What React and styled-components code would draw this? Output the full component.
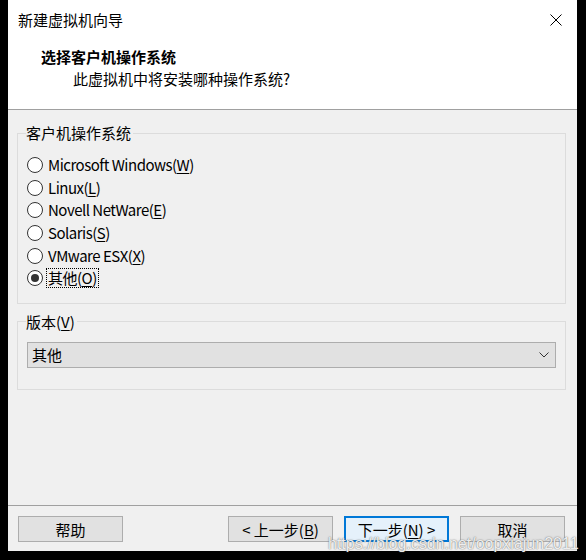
import React, { useState } from 'react';
import styled, { createGlobalStyle } from 'styled-components';

const GlobalStyle = createGlobalStyle`
  html, body {
    margin: 0;
    padding: 0;
    background: #000;
  }
  body {
    font-family: "Noto Sans CJK SC", "Noto Sans", sans-serif;
    font-size: 15px;
    color: #000;
  }
`;

// ------------- Styled components -------------
const Page = styled.div`
  position: relative;
  width: 586px;
  height: 560px;
  background: #000;
  overflow: hidden;
`;

const Window = styled.div`
  margin-left: 8px;
  width: 569px;
  height: 551px;
  background: #f0f0f0;
  display: flex;
  flex-direction: column;
`;

const TitleBar = styled.div`
  height: 38px;
  background: #fff;
  display: flex;
  align-items: center;
  justify-content: space-between;
  padding-left: 10px;
  padding-top: 1px;
  box-sizing: border-box;
`;

const Title = styled.span`
  font-size: 15px;
  line-height: 20px;
`;

const CloseButton = styled.button`
  width: 42px;
  height: 38px;
  border: none;
  background: transparent;
  padding: 0;
  display: flex;
  align-items: center;
  justify-content: center;
`;

const Header = styled.div`
  height: 72px;
  background: #fff;
  box-sizing: border-box;
  padding: 8px 0 0 33px;
  border-bottom: 1px solid #a0a0a0;
`;

const Heading = styled.div`
  font-weight: bold;
  font-size: 15px;
  line-height: 22px;
`;

const SubTitle = styled.div`
  padding-left: 32px;
  font-size: 15px;
  line-height: 22px;
`;

const Content = styled.div`
  flex: 1;
  padding: 13px 11px 0 9px;
  display: flex;
  flex-direction: column;
  gap: 8px;
`;

const Group = styled.fieldset`
  margin: 0;
  border: 1px solid #dcdcdc;
  padding: 0 9px ${p => p.$bottom}px 9px;
`;

const Legend = styled.legend`
  padding: 0 2px 0 0;
  margin-left: -1px;
  font-size: 15px;
  line-height: 20px;
`;

const RadioList = styled.div`
  padding-top: 11px;
  display: flex;
  flex-direction: column;
`;

const RadioRow = styled.label`
  height: 22.6px;
  display: flex;
  align-items: center;
  gap: 4px;
  cursor: default;
`;

const RadioCircle = styled.span`
  width: 14px;
  height: 14px;
  border: 1px solid #333;
  border-radius: 50%;
  background: #fff;
  display: flex;
  align-items: center;
  justify-content: center;
  flex-shrink: 0;

  &::after {
    content: '';
    width: 8px;
    height: 8px;
    border-radius: 50%;
    background: ${p => (p.$checked ? '#333' : 'transparent')};
  }
`;

const RadioText = styled.span`
  line-height: 18px;
  padding: 0 1px;
  letter-spacing: -0.5px;
  outline: ${p => (p.$focus ? '1px dotted #000' : 'none')};
`;

const Key = styled.span`
  text-decoration: underline;
  text-underline-offset: 2px;
`;

const SelectBox = styled.div`
  margin-top: 10px;
  height: 26px;
  box-sizing: border-box;
  border: 1px solid #adadad;
  background: #e1e1e1;
  display: flex;
  align-items: center;
  justify-content: space-between;
  padding: 0 6px 0 4px;
`;

const Footer = styled.div`
  height: 46px;
  border-top: 1px solid #a0a0a0;
  display: flex;
  align-items: flex-start;
  padding: 10px 12px 0 10px;
  box-sizing: border-box;
`;

const Button = styled.button`
  width: 105px;
  height: 26px;
  box-sizing: border-box;
  border: 1px solid ${p => (p.$primary ? '#0078d7' : '#adadad')};
  box-shadow: ${p => (p.$primary ? 'inset 0 0 0 1px #0078d7' : 'none')};
  background: ${p => (p.$primary ? '#e5f1fb' : '#e1e1e1')};
  font-family: inherit;
  font-size: 15px;
  color: #000;
  padding: 0;
  margin-left: ${p => p.$gap || 0}px;
`;

const Spacer = styled.div`
  flex: 1;
`;

const Watermark = styled.div`
  position: absolute;
  left: 328px;
  top: 536px;
  font-family: "Liberation Sans", Arial, sans-serif;
  font-size: 16px;
  line-height: 16px;
  color: rgba(255, 255, 255, 0.9);
  text-shadow: 0 0 1px rgba(90, 90, 90, 0.9), 0 0 2px rgba(120, 120, 120, 0.5);
  white-space: nowrap;
  pointer-events: none;
`;
// ----------Final styled components -----------

const systems = [
  { id: 'win', name: 'Microsoft Windows', key: 'W' },
  { id: 'linux', name: 'Linux', key: 'L' },
  { id: 'novell', name: 'Novell NetWare', key: 'E' },
  { id: 'solaris', name: 'Solaris', key: 'S' },
  { id: 'esx', name: 'VMware ESX', key: 'X' },
  { id: 'other', name: '其他', key: 'O' },
];

export default function App() {
  const [selected, setSelected] = useState('other');

  return (
    <Page>
      <GlobalStyle />
      <Window>
        <TitleBar>
          <Title>新建虚拟机向导</Title>
          <CloseButton aria-label="关闭">
            <svg width="12" height="12" viewBox="0 0 12 12">
              <path d="M0.5 0.5 L11.5 11.5 M11.5 0.5 L0.5 11.5" stroke="#000" strokeWidth="1" />
            </svg>
          </CloseButton>
        </TitleBar>

        <Header>
          <Heading>选择客户机操作系统</Heading>
          <SubTitle>此虚拟机中将安装哪种操作系统?</SubTitle>
        </Header>

        <Content>
          <Group $bottom={13}>
            <Legend>客户机操作系统</Legend>
            <RadioList>
              {systems.map(s => (
                <RadioRow key={s.id} onClick={() => setSelected(s.id)}>
                  <RadioCircle $checked={selected === s.id} />
                  <RadioText $focus={selected === s.id}>
                    {s.name}(<Key>{s.key}</Key>)
                  </RadioText>
                </RadioRow>
              ))}
            </RadioList>
          </Group>

          <Group $bottom={21}>
            <Legend>版本(<Key>V</Key>)</Legend>
            <SelectBox>
              <span>其他</span>
              <svg width="10" height="6" viewBox="0 0 10 6">
                <path d="M0.5 0.5 L5 5 L9.5 0.5" stroke="#333" strokeWidth="1" fill="none" />
              </svg>
            </SelectBox>
          </Group>
        </Content>

        <Footer>
          <Button>帮助</Button>
          <Spacer />
          <Button>&lt; 上一步(<Key>B</Key>)</Button>
          <Button $primary $gap={11}>下一步(<Key>N</Key>) &gt;</Button>
          <Button $gap={11}>取消</Button>
        </Footer>
      </Window>
      <Watermark>https://blog.csdn.net/oopxiajun2011</Watermark>
    </Page>
  );
}
